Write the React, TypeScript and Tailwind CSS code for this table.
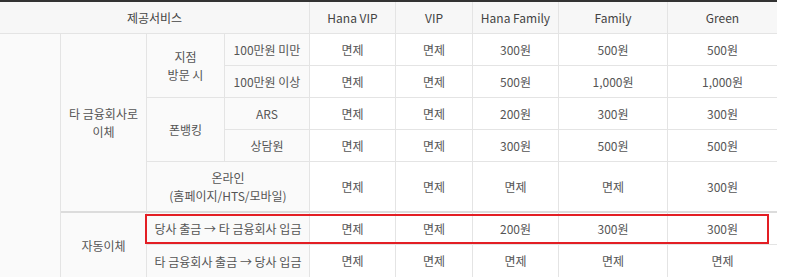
const font = { fontFamily: '"Noto Sans CJK KR", "Noto Sans", sans-serif' };

const headers = ["Hana VIP", "VIP", "Hana Family", "Family", "Green"];

type Row = { label?: string; cells: string[] };

const Cell = ({
  className = "",
  children,
}: {
  className?: string;
  children?: React.ReactNode;
}) => (
  <div
    className={`flex items-center justify-center text-center leading-[18px] border-b border-r border-[#e4e4e4] ${className}`}
  >
    {children}
  </div>
);

const DataCells = ({ values, last }: { values: string[]; last?: boolean }) => (
  <>
    {values.map((v, i) => (
      <Cell
        key={i}
        className={`bg-white ${i === values.length - 1 ? "border-r-0" : ""} ${last ? "border-b-[2px] border-b-[#dcdcdc]" : ""}`}
      >
        {v}
      </Cell>
    ))}
  </>
);

export default function App() {
  const rows: Row[] = [
    { cells: ["면제", "면제", "300원", "500원", "500원"] },
    { cells: ["면제", "면제", "500원", "1,000원", "1,000원"] },
    { cells: ["면제", "면제", "200원", "300원", "300원"] },
    { cells: ["면제", "면제", "300원", "500원", "500원"] },
    { cells: ["면제", "면제", "면제", "면제", "300원"] },
    { cells: ["면제", "면제", "200원", "300원", "300원"] },
    { cells: ["면제", "면제", "면제", "면제", "면제"] },
  ];

  return (
    <div className="w-[800px] h-[277px] bg-white overflow-hidden" style={font}>
      <div className="relative w-[777px] border-t-2 border-[#333]">
        <div className="grid grid-cols-[61px_86px_78px_85px_86px_77px_86px_109px_109px] grid-rows-[32px_32px_32px_32px_32px_51px_32px_33px] text-[12px] text-[#555]">
          <Cell className="col-span-4 bg-[#f7f7f7] text-[#444]">제공서비스</Cell>
          {headers.map((h, i) => (
            <Cell
              key={h}
              className={`bg-[#f7f7f7] text-[#444] ${i === headers.length - 1 ? "border-r-0" : ""}`}
            >
              {h}
            </Cell>
          ))}

          {/* row 1 */}
          <Cell className="row-span-7 bg-[#fafafa] border-b-0" />
          <Cell className="row-span-5 bg-[#fafafa] border-b-[2px] border-b-[#dcdcdc]">
            타 금융회사로
            <br />
            이체
          </Cell>
          <Cell className="row-span-2 bg-[#fafafa]">
            지점
            <br />
            방문 시
          </Cell>
          <Cell className="bg-[#fafafa]">100만원 미만</Cell>
          <DataCells values={rows[0].cells} />

          {/* row 2 */}
          <Cell className="bg-[#fafafa]">100만원 이상</Cell>
          <DataCells values={rows[1].cells} />

          {/* row 3 */}
          <Cell className="row-span-2 bg-[#fafafa]">폰뱅킹</Cell>
          <Cell className="bg-[#fafafa]">ARS</Cell>
          <DataCells values={rows[2].cells} />

          {/* row 4 */}
          <Cell className="bg-[#fafafa]">상담원</Cell>
          <DataCells values={rows[3].cells} />

          {/* row 5 */}
          <Cell className="col-span-2 bg-[#fafafa] border-b-[2px] border-b-[#dcdcdc]">
            온라인
            <br />
            (홈페이지/HTS/모바일)
          </Cell>
          <DataCells values={rows[4].cells} last />

          {/* row 6 */}
          <Cell className="row-span-2 bg-[#fafafa] border-b-0">자동이체</Cell>
          <Cell className="col-span-2 bg-[#fafafa]">당사 출금 → 타 금융회사 입금</Cell>
          <DataCells values={rows[5].cells} />

          {/* row 7 */}
          <Cell className="col-span-2 bg-[#fafafa] border-b-0">타 금융회사 출금 → 당사 입금</Cell>
          <DataCells values={rows[6].cells} />
        </div>

        <div className="absolute left-[145px] top-[212px] w-[624px] h-[30px] border-2 border-[#e31e24]" />
      </div>
    </div>
  );
}
